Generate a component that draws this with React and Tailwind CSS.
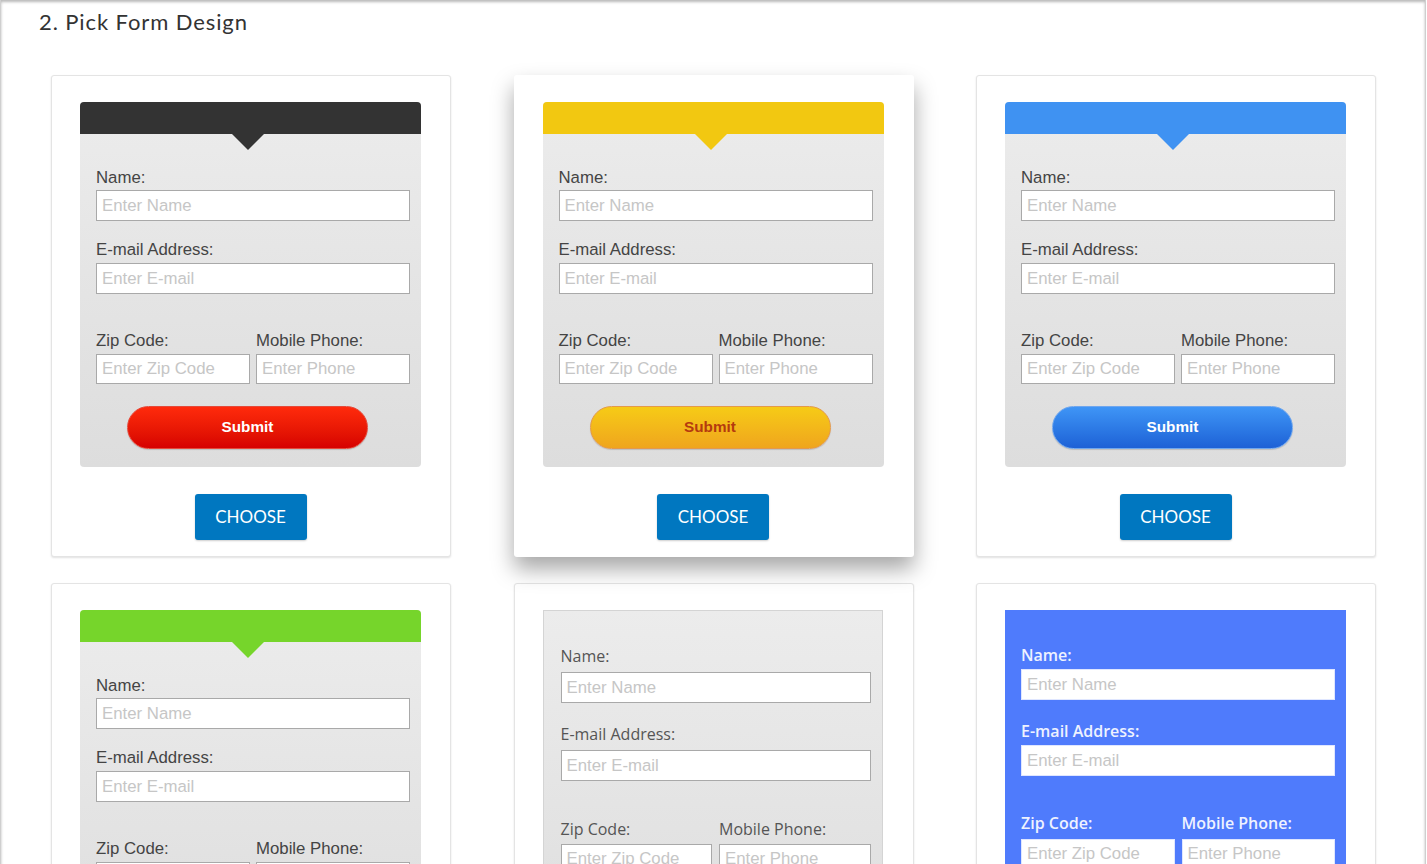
import React from "react";

const designs = [
  { key: "dark", header: "bg-[#333333]", tri: "#333333", submit: "red" },
  { key: "yellow", header: "bg-[#f2c811]", tri: "#f2c811", submit: "yellow", lifted: true },
  { key: "blue", header: "bg-[#3f92f2]", tri: "#3f92f2", submit: "blue" },
  { key: "green", header: "bg-[#76d52b]", tri: "#76d52b", submit: "green" },
  { key: "plain", variant: "plain" },
  { key: "royal", variant: "royal" },
];

const submitStyles = {
  red: "bg-gradient-to-b from-[#ff2a0c] to-[#d60000] border-[#e5493a] text-white",
  yellow: "bg-gradient-to-b from-[#f6cb16] to-[#efa51d] border-[#e4994a] text-[#b53a0e]",
  blue: "bg-gradient-to-b from-[#3f95f6] to-[#1e61d6] border-[#6fa6ee] text-white",
  green: "bg-gradient-to-b from-[#7ddc33] to-[#56b41c] border-[#6cc23a] text-white",
};

const arial = "font-['Liberation_Sans',Arial,sans-serif]";
const treb = "font-['Open_Sans','Liberation_Sans',sans-serif]";

function Input({ placeholder, h = "h-[31px]", border = "border border-[#a9a9a9]" }) {
  return (
    <input
      readOnly
      placeholder={placeholder}
      className={`block w-full ${h} ${border} bg-white pl-[5px] text-[16.8px] ${arial} text-[#333] placeholder:text-[#c6c6c6] outline-none`}
    />
  );
}

function ClassicForm({ d }) {
  const label = `h-5 leading-5 text-[16.8px] text-[#444] ${arial}`;
  return (
    <div className="w-[341px] rounded-[4px] bg-gradient-to-b from-[#ececec] to-[#dddddd]">
      <div className={`relative h-8 rounded-t-[4px] ${d.header}`}>
        <svg className="absolute left-[152px] top-full" width="32" height="16" viewBox="0 0 32 16">
          <polygon points="0,0 32,0 16,16" fill={d.tri} />
        </svg>
      </div>
      <div className="pl-4 pr-[11px] pt-[34px] pb-[18px]">
        <div className={label}>Name:</div>
        <div className="mt-[2px]">
          <Input placeholder="Enter Name" />
        </div>
        <div className={`${label} mt-[19px]`}>E-mail Address:</div>
        <div className="mt-[3px]">
          <Input placeholder="Enter E-mail" />
        </div>
        <div className="mt-[37px] grid grid-cols-2 gap-[6px]">
          <div>
            <div className={label}>Zip Code:</div>
            <div className="mt-[3px]">
              <Input placeholder="Enter Zip Code" h="h-[30px]" />
            </div>
          </div>
          <div>
            <div className={label}>Mobile Phone:</div>
            <div className="mt-[3px]">
              <Input placeholder="Enter Phone" h="h-[30px]" />
            </div>
          </div>
        </div>
        <button
          className={`mt-[22px] ml-[31px] flex h-[43px] w-[241px] items-center justify-center rounded-full border text-[15.3px] font-bold ${arial} shadow-[0_1px_1px_rgba(0,0,0,0.15)] ${submitStyles[d.submit]}`}
        >
          Submit
        </button>
      </div>
    </div>
  );
}

function FlatForm({ royal }) {
  const label = royal
    ? `h-5 leading-5 text-[16px] font-semibold text-[#eef2ff] ${treb}`
    : `h-5 leading-5 text-[16px] text-[#555] ${treb}`;
  const inputBorder = royal ? "border border-[#dfe6ff]" : "border border-[#a9a9a9]";
  return (
    <div
      className={
        royal
          ? "w-[341px] h-[365px] bg-[#4f7bfc] pl-4 pr-[11px] pt-[35px]"
          : "w-[340px] h-[365px] border border-[#d4d4d4] bg-gradient-to-b from-[#ececec] to-[#dddddd] pl-[17px] pr-[11px] pt-[35px]"
      }
    >
      <div className={label}>Name:</div>
      <div className={royal ? "mt-[4px]" : "mt-[6px]"}>
        <Input placeholder="Enter Name" border={inputBorder} />
      </div>
      <div className={`${label} mt-[21px]`}>E-mail Address:</div>
      <div className={royal ? "mt-[4px]" : "mt-[6px]"}>
        <Input placeholder="Enter E-mail" border={inputBorder} />
      </div>
      <div className={`grid grid-cols-2 gap-[7px] ${royal ? "mt-[37px]" : "mt-[38px]"}`}>
        <div>
          <div className={label}>Zip Code:</div>
          <div className={royal ? "mt-[6px]" : "mt-[5px]"}>
            <Input placeholder="Enter Zip Code" h="h-[30px]" border={inputBorder} />
          </div>
        </div>
        <div>
          <div className={label}>Mobile Phone:</div>
          <div className={royal ? "mt-[6px]" : "mt-[5px]"}>
            <Input placeholder="Enter Phone" h="h-[30px]" border={inputBorder} />
          </div>
        </div>
      </div>
    </div>
  );
}

function DesignCard({ d }) {
  return (
    <div
      className={
        d.lifted
          ? "relative z-10 flex h-[482px] w-[400px] flex-col items-start rounded-[3px] bg-white pl-[29px] pt-[27px] shadow-[0_12px_22px_rgba(0,0,0,0.35)]"
          : "flex h-[482px] w-[400px] flex-col items-start rounded-[3px] border border-[#e4e4e4] bg-white pl-[28px] pt-[26px] shadow-[0_1px_2px_rgba(0,0,0,0.12)]"
      }
    >
      {d.variant === "plain" ? (
        <FlatForm />
      ) : d.variant === "royal" ? (
        <FlatForm royal />
      ) : (
        <ClassicForm d={d} />
      )}
      <div className="mt-[27px] flex w-[341px] justify-center">
        <button className="flex h-[46px] w-[112px] items-center justify-center rounded-[3px] bg-[#0077c0] font-['Lato',sans-serif] text-[17px] text-white shadow-[0_1px_2px_rgba(0,0,0,0.2)]">
          CHOOSE
        </button>
      </div>
    </div>
  );
}

export default function App() {
  return (
    <div className="min-h-screen w-[1426px] border-x border-[#cfcfcf] bg-white shadow-[inset_0_2px_3px_rgba(0,0,0,0.28)]">
      <div className="pl-[38px] pt-2">
        <h2 className="h-7 font-['Lato',sans-serif] text-[22px] leading-7 tracking-[0.9px] text-[#333]">
          2. Pick Form Design
        </h2>
      </div>
      <div className="ml-[50px] mt-[39px] grid w-[1326px] grid-cols-[400px_400px_400px] gap-x-[62.5px] gap-y-[26px]">
        {designs.map((d) => (
          <DesignCard key={d.key} d={d} />
        ))}
      </div>
    </div>
  );
}
